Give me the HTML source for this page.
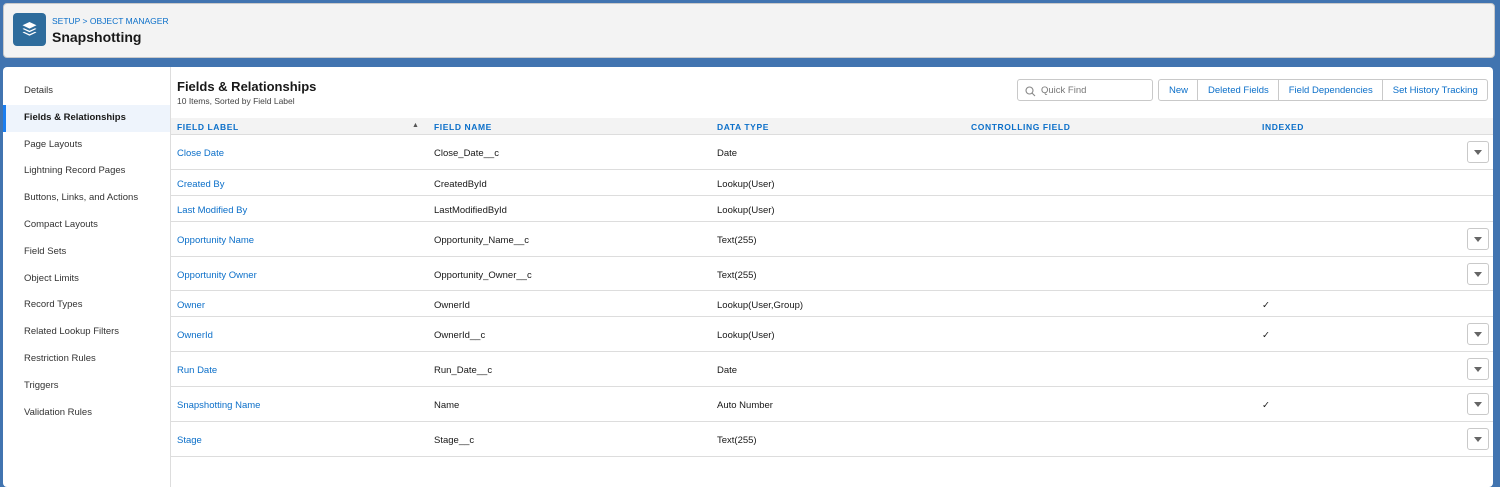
<!DOCTYPE html>
<html><head><style>
*{box-sizing:border-box;margin:0;padding:0}
body{width:1500px;height:483px;overflow:hidden;background:#4174b0;font-family:"Liberation Sans",sans-serif;position:relative;font-size:10px;color:#181818}
.hdr{position:absolute;left:3px;top:3px;width:1492px;height:55px;background:#f3f3f3;border-radius:4px;border:1px solid #c9c9c9}
.icon{position:absolute;left:9px;top:9px;width:33px;height:33px;background:#2e6c9c;border-radius:4px}
.crumb{position:absolute;left:48px;top:12px;color:#0b6fc9;font-size:8.5px}
.title{position:absolute;left:48px;top:25px;font-size:14px;font-weight:bold}
.card{position:absolute;left:3px;top:67px;width:1490px;height:420px;background:#fff;border-radius:4px}
.side{position:absolute;left:0;top:0;width:168px;height:420px;border-right:1px solid #ddd}
.side div{height:26.8px;line-height:26.8px;padding-left:21px;font-size:9.5px;color:#333}
.side .act{background:#eef4fc;border-left:3px solid #1b7ef0;padding-left:18px;font-weight:bold;color:#181818}
.h1{position:absolute;left:174px;top:12px;font-size:13px;font-weight:bold}
.sub{position:absolute;left:174px;top:29px;font-size:8.5px;color:#444}
.qf{position:absolute;left:1014px;top:12px;width:136px;height:22px;border:1px solid #c9c9c9;border-radius:3px;color:#777;font-size:9.5px;line-height:22px;padding-left:23px}
.btns{position:absolute;left:1155px;top:12px;height:22px;border:1px solid #c9c9c9;border-radius:3px;display:flex}
.btns span{color:#0b6fc9;font-size:9.5px;line-height:21px;padding:0 9px 0 10px;border-right:1px solid #c9c9c9}
.btns span:last-child{border:none}
.th{position:absolute;left:168px;top:51px;width:1322px;height:17px;background:#f3f3f3;border-bottom:1px solid #ddd}
.th span{position:absolute;top:4px;font-size:8.5px;font-weight:bold;color:#0b6fc9;letter-spacing:.6px}
.row{position:absolute;left:168px;width:1322px;border-bottom:1px solid #ddd}
.row span{position:absolute;font-size:9.5px}
.row .l{color:#0b6fc9}
.dd{position:absolute;right:4px;width:22px;height:22px;border:1px solid #c9c9c9;border-radius:3px}
.dd:after{content:"";position:absolute;left:6px;top:8px;border-left:4.5px solid transparent;border-right:4.5px solid transparent;border-top:5px solid #666}
</style></head><body>
<div class="hdr">
<div class="icon"><svg width="33" height="33" viewBox="0 0 33 33"><g fill="#fff"><path d="M16.5 9l7 3.3-7 3.3-7-3.3z"/><path d="M11 15.2l5.5 2.6 5.5-2.6 1.5.7-7 3.3-7-3.3z"/><path d="M11 18.7l5.5 2.6 5.5-2.6 1.5.7-7 3.3-7-3.3z"/></g></svg></div>
<div class="crumb">SETUP &gt; OBJECT MANAGER</div>
<div class="title">Snapshotting</div>
</div>
<div class="card">
<div class="side">
<div style="margin-top:11px">Details</div>
<div class="act">Fields &amp; Relationships</div>
<div>Page Layouts</div><div>Lightning Record Pages</div><div>Buttons, Links, and Actions</div><div>Compact Layouts</div><div>Field Sets</div><div>Object Limits</div><div>Record Types</div><div>Related Lookup Filters</div><div>Restriction Rules</div><div>Triggers</div><div>Validation Rules</div>
</div>
<div class="h1">Fields &amp; Relationships</div>
<div class="sub">10 Items, Sorted by Field Label</div>
<div class="qf"><svg style="position:absolute;left:7px;top:6px" width="11" height="11" viewBox="0 0 11 11"><circle cx="4.5" cy="4.5" r="3.5" fill="none" stroke="#888" stroke-width="1.1"/><path d="M7 7l3 3" stroke="#888" stroke-width="1.1"/></svg>Quick Find</div>
<div class="btns"><span>New</span><span>Deleted Fields</span><span>Field Dependencies</span><span>Set History Tracking</span></div>
<div class="th"><span style="left:6px">FIELD LABEL</span><span style="left:241px;color:#555;font-size:7px;top:4px">▲</span><span style="left:263px">FIELD NAME</span><span style="left:546px">DATA TYPE</span><span style="left:800px">CONTROLLING FIELD</span><span style="left:1091px">INDEXED</span></div>
<div class="row" style="top:68px;height:35px"><span class="l" style="left:6px;top:13px">Close Date</span><span style="left:263px;top:13px">Close_Date__c</span><span style="left:546px;top:13px">Date</span><div class="dd" style="top:6px"></div></div>
<div class="row" style="top:103px;height:26px"><span class="l" style="left:6px;top:9px">Created By</span><span style="left:263px;top:9px">CreatedById</span><span style="left:546px;top:9px">Lookup(User)</span></div>
<div class="row" style="top:129px;height:26px"><span class="l" style="left:6px;top:9px">Last Modified By</span><span style="left:263px;top:9px">LastModifiedById</span><span style="left:546px;top:9px">Lookup(User)</span></div>
<div class="row" style="top:155px;height:35px"><span class="l" style="left:6px;top:13px">Opportunity Name</span><span style="left:263px;top:13px">Opportunity_Name__c</span><span style="left:546px;top:13px">Text(255)</span><div class="dd" style="top:6px"></div></div>
<div class="row" style="top:190px;height:34px"><span class="l" style="left:6px;top:13px">Opportunity Owner</span><span style="left:263px;top:13px">Opportunity_Owner__c</span><span style="left:546px;top:13px">Text(255)</span><div class="dd" style="top:6px"></div></div>
<div class="row" style="top:224px;height:26px"><span class="l" style="left:6px;top:9px">Owner</span><span style="left:263px;top:9px">OwnerId</span><span style="left:546px;top:9px">Lookup(User,Group)</span><span style="left:1091px;top:9px">✓</span></div>
<div class="row" style="top:250px;height:35px"><span class="l" style="left:6px;top:13px">OwnerId</span><span style="left:263px;top:13px">OwnerId__c</span><span style="left:546px;top:13px">Lookup(User)</span><span style="left:1091px;top:13px">✓</span><div class="dd" style="top:6px"></div></div>
<div class="row" style="top:285px;height:35px"><span class="l" style="left:6px;top:13px">Run Date</span><span style="left:263px;top:13px">Run_Date__c</span><span style="left:546px;top:13px">Date</span><div class="dd" style="top:6px"></div></div>
<div class="row" style="top:320px;height:35px"><span class="l" style="left:6px;top:13px">Snapshotting Name</span><span style="left:263px;top:13px">Name</span><span style="left:546px;top:13px">Auto Number</span><span style="left:1091px;top:13px">✓</span><div class="dd" style="top:6px"></div></div>
<div class="row" style="top:355px;height:35px"><span class="l" style="left:6px;top:13px">Stage</span><span style="left:263px;top:13px">Stage__c</span><span style="left:546px;top:13px">Text(255)</span><div class="dd" style="top:6px"></div></div>
</div>
</body></html>
